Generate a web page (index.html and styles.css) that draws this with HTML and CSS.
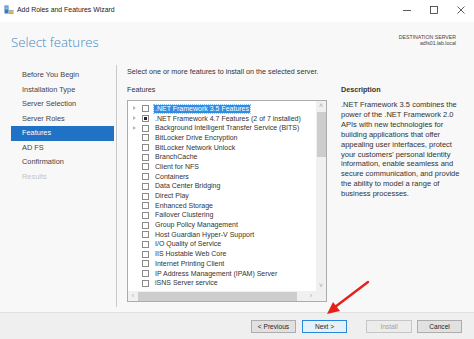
FILE: index.html
```html
<!DOCTYPE html>
<html lang="en">
<head>
    <meta charset="UTF-8">
    <meta name="viewport" content="width=device-width, initial-scale=1.0">
    <title>Add Roles and Features Wizard</title>
    <link rel="stylesheet" href="styles.css">
</head>
<body>
<div class="window">
    <!-- Title bar -->
    <div class="titlebar">
        <svg class="app-icon" width="10" height="10" viewBox="0 0 10 10">
            <rect x="0.5" y="0.5" width="4" height="8" fill="#3a78c2"/>
            <rect x="1.2" y="1.5" width="2.6" height="1" fill="#bfe0ff"/>
            <rect x="1.2" y="3.3" width="2.6" height="1" fill="#bfe0ff"/>
            <rect x="4.5" y="5" width="5" height="4" fill="#9aa7b4"/>
            <rect x="5.2" y="5.8" width="3.6" height="2.2" fill="#e9b84a"/>
        </svg>
        <span class="title">Add Roles and Features Wizard</span>
        <div class="controls">
            <svg width="10" height="10" viewBox="0 0 10 10"><line x1="1" y1="5.5" x2="9" y2="5.5" stroke="#333" stroke-width="0.8"/></svg>
            <svg width="10" height="10" viewBox="0 0 10 10"><rect x="1.5" y="1.5" width="7" height="7" fill="none" stroke="#333" stroke-width="0.8"/></svg>
            <svg width="10" height="10" viewBox="0 0 10 10"><path d="M1.5 1.5 L8.5 8.5 M8.5 1.5 L1.5 8.5" stroke="#333" stroke-width="0.8"/></svg>
        </div>
    </div>

    <!-- Header -->
    <div class="header">
        <h1>Select features</h1>
        <div class="dest">
            <div>DESTINATION SERVER</div>
            <div>adfs01.lab.local</div>
        </div>
    </div>

    <!-- Body -->
    <div class="body">
        <ul class="nav">
            <li>Before You Begin</li>
            <li>Installation Type</li>
            <li>Server Selection</li>
            <li>Server Roles</li>
            <li class="active">Features</li>
            <li>AD FS</li>
            <li>Confirmation</li>
            <li class="disabled">Results</li>
        </ul>

        <div class="content">
            <p class="intro">Select one or more features to install on the selected server.</p>
            <div class="columns">
                <div class="features">
                    <div class="label">Features</div>
                    <div class="tree">
                        <div class="rows">
                            <div class="row"><span class="exp"></span><span class="chk"></span><span class="txt selected">.NET Framework 3.5 Features</span></div>
                            <div class="row"><span class="exp"></span><span class="chk partial"></span><span class="txt">.NET Framework 4.7 Features (2 of 7 installed)</span></div>
                            <div class="row"><span class="exp"></span><span class="chk"></span><span class="txt">Background Intelligent Transfer Service (BITS)</span></div>
                            <div class="row"><span class="noexp"></span><span class="chk"></span><span class="txt">BitLocker Drive Encryption</span></div>
                            <div class="row"><span class="noexp"></span><span class="chk"></span><span class="txt">BitLocker Network Unlock</span></div>
                            <div class="row"><span class="noexp"></span><span class="chk"></span><span class="txt">BranchCache</span></div>
                            <div class="row"><span class="noexp"></span><span class="chk"></span><span class="txt">Client for NFS</span></div>
                            <div class="row"><span class="noexp"></span><span class="chk"></span><span class="txt">Containers</span></div>
                            <div class="row"><span class="noexp"></span><span class="chk"></span><span class="txt">Data Center Bridging</span></div>
                            <div class="row"><span class="noexp"></span><span class="chk"></span><span class="txt">Direct Play</span></div>
                            <div class="row"><span class="noexp"></span><span class="chk"></span><span class="txt">Enhanced Storage</span></div>
                            <div class="row"><span class="noexp"></span><span class="chk"></span><span class="txt">Failover Clustering</span></div>
                            <div class="row"><span class="noexp"></span><span class="chk"></span><span class="txt">Group Policy Management</span></div>
                            <div class="row"><span class="noexp"></span><span class="chk"></span><span class="txt">Host Guardian Hyper-V Support</span></div>
                            <div class="row"><span class="noexp"></span><span class="chk"></span><span class="txt">I/O Quality of Service</span></div>
                            <div class="row"><span class="noexp"></span><span class="chk"></span><span class="txt">IIS Hostable Web Core</span></div>
                            <div class="row"><span class="noexp"></span><span class="chk"></span><span class="txt">Internet Printing Client</span></div>
                            <div class="row"><span class="noexp"></span><span class="chk"></span><span class="txt">IP Address Management (IPAM) Server</span></div>
                            <div class="row"><span class="noexp"></span><span class="chk"></span><span class="txt">iSNS Server service</span></div>
                        </div>
                        <div class="vscroll">
                            <span class="sarrow">&#708;</span>
                            <span class="vthumb"></span>
                            <span class="sarrow bottom">&#709;</span>
                        </div>
                        <div class="hscroll">
                            <span class="sarrow">&lsaquo;</span>
                            <span class="hthumb"></span>
                            <span class="sarrow">&rsaquo;</span>
                        </div>
                        <div class="corner"></div>
                    </div>
                </div>

                <div class="desc">
                    <div class="label">Description</div>
                    <p>.NET Framework 3.5 combines the<br>
                        power of the .NET Framework 2.0<br>
                        APIs with new technologies for<br>
                        building applications that offer<br>
                        appealing user interfaces, protect<br>
                        your customers' personal identity<br>
                        information, enable seamless and<br>
                        secure communication, and provide<br>
                        the ability to model a range of<br>
                        business processes.</p>
                </div>
            </div>
        </div>
    </div>

    <!-- Footer buttons -->
    <div class="footer">
        <button class="btn">&lt; Previous</button>
        <button class="btn primary">Next &gt;</button>
        <button class="btn install" disabled>Install</button>
        <button class="btn">Cancel</button>
    </div>

    <!-- Red pointer arrow -->
    <svg class="arrow" width="474" height="339" viewBox="0 0 474 339">
        <line x1="368" y1="282" x2="335" y2="307" stroke="#e3221c" stroke-width="2.4" stroke-linecap="round"/>
        <polygon points="327,314 333,302 340,311" fill="#e3221c"/>
    </svg>
</div>
</body>
</html>
```

FILE: styles.css
```css
/* General Reset */
* {
    box-sizing: border-box;
}

body {
    margin: 0;
    padding: 0;
    font-family: "Liberation Sans", Arial, sans-serif;
    background: #ffffff;
}

.window {
    position: relative;
    width: 474px;
    height: 339px;
    display: flex;
    flex-direction: column;
    background: #f8f8f8;
    overflow: hidden;
}

/* Title bar */
.titlebar {
    height: 22px;
    background: #ffffff;
    display: flex;
    align-items: center;
    padding-left: 4px;
    padding-bottom: 3px;
}

.app-icon {
    margin-right: 3px;
}

.title {
    font-size: 6.9px;
    color: #222;
}

.controls {
    margin-left: auto;
    display: flex;
    gap: 17px;
    padding-right: 8px;
}

/* Header */
.header {
    height: 43px;
    display: flex;
    justify-content: space-between;
    padding: 0 18px 0 11px;
}

.header h1 {
    margin: 0;
    padding-top: 11px;
    font-family: "Open Sans", "Liberation Sans", sans-serif;
    font-weight: 300;
    font-size: 13.2px;
    color: #4189c6;
}

.dest {
    padding-top: 12px;
    font-size: 5.2px;
    line-height: 6px;
    color: #444;
    text-align: right;
}

/* Body */
.body {
    flex: 1;
    display: flex;
}

.nav {
    list-style: none;
    margin: 0 0 5px 0;
    padding: 3px 2px 0 11px;
    width: 117px;
    border-right: 1px solid #c9c9c9;
}

.nav li {
    height: 14.5px;
    line-height: 14.5px;
    padding-left: 11px;
    font-size: 7.4px;
    color: #444;
}

.nav li.active {
    background: #1f72c4;
    color: #ffffff;
}

.nav li.disabled {
    color: #c4c4c4;
}

.content {
    flex: 1;
    padding: 2px 8px 0 10px;
}

.intro {
    margin: 0;
    height: 10px;
    line-height: 10px;
    font-size: 7.2px;
    color: #333;
}

.columns {
    display: flex;
    gap: 14px;
}

.label {
    margin-top: 8px;
    height: 10px;
    line-height: 10px;
    font-size: 7.2px;
    color: #333;
}

.desc .label {
    font-weight: bold;
}

/* Feature tree */
.tree {
    margin-top: 5px;
    width: 200px;
    height: 202px;
    border: 1px solid #acacac;
    background: #ffffff;
    display: grid;
    grid-template-columns: 1fr 10px;
    grid-template-rows: 1fr 10px;
}

.rows {
    padding-top: 3px;
    overflow: hidden;
}

.row {
    height: 9.7px;
    display: flex;
    align-items: center;
    padding-left: 5px;
    font-size: 7px;
    color: #333;
    white-space: nowrap;
}

.exp,
.noexp {
    width: 9px;
    height: 5px;
}

.exp {
    position: relative;
}

.exp::before {
    content: "";
    position: absolute;
    left: 0;
    top: 0;
    border-left: 3px solid #b9b9b9;
    border-top: 2.5px solid transparent;
    border-bottom: 2.5px solid transparent;
}

.chk {
    width: 7px;
    height: 7px;
    border: 1px solid #8a8a8a;
    background: #ffffff;
    margin-right: 5px;
    flex-shrink: 0;
}

.chk.partial {
    background: #222;
    box-shadow: inset 0 0 0 1px #ffffff;
}

.txt {
    padding: 0 1px;
    height: 8px;
    line-height: 8px;
}

.txt.selected {
    background: #2f8de4;
    color: #ffffff;
    outline: 1px dotted #8cc2f2;
}

/* Scrollbars */
.vscroll {
    background: #f0f0f0;
    display: flex;
    flex-direction: column;
    align-items: center;
}

.vthumb {
    width: 9px;
    height: 45px;
    margin-top: 1px;
    background: #cdcdcd;
}

.sarrow {
    height: 10px;
    width: 10px;
    line-height: 10px;
    text-align: center;
    font-size: 7px;
    color: #a8a8a8;
}

.sarrow.bottom {
    margin-top: auto;
}

.hscroll {
    background: #f0f0f0;
    display: flex;
    align-items: center;
}

.hthumb {
    width: 159px;
    height: 9px;
    background: #cdcdcd;
}

.hscroll .sarrow:last-child {
    margin-left: auto;
}

.corner {
    background: #f0f0f0;
}

/* Description */
.desc {
    width: 125px;
}

.desc p {
    margin: 5px 0 0 0;
    font-size: 7.5px;
    line-height: 9.9px;
    color: #333;
    white-space: nowrap;
}

/* Footer */
.footer {
    height: 27px;
    flex-shrink: 0;
    background: #efefef;
    border-top: 1px solid #e0e0e0;
    display: flex;
    align-items: center;
    padding-right: 12px;
    justify-content: flex-end;
}

.btn {
    width: 45px;
    height: 13px;
    padding: 0;
    margin-left: 6px;
    font-family: "Liberation Sans", Arial, sans-serif;
    font-size: 6.6px;
    color: #222;
    background: #e1e1e1;
    border: 1px solid #adadad;
}

.btn.primary {
    background: #e5f1fb;
    border-color: #2a86d8;
}

.btn.install {
    width: 46px;
    margin-left: 19px;
    color: #a3a3a3;
    background: #ececec;
    border-color: #c6c6c6;
}

.btn.install + .btn {
    margin-left: 5px;
}

/* Overlay arrow */
.arrow {
    position: absolute;
    top: 0;
    left: 0;
    pointer-events: none;
}
```
